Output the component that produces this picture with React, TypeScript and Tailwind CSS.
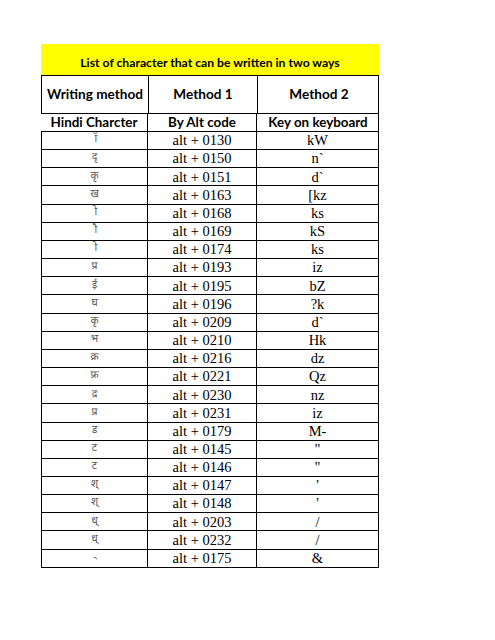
import React from "react";

const rows: [string, string, string][] = [
  ["\u00A0ॉ", "alt + 0130", "kW"],
  ["दृ", "alt + 0150", "n`"],
  ["कृ", "alt + 0151", "d`"],
  ["ख", "alt + 0163", "[kz"],
  ["\u00A0ो", "alt + 0168", "ks"],
  ["\u00A0ौ", "alt + 0169", "kS"],
  ["\u00A0ो", "alt + 0174", "ks"],
  ["प्र", "alt + 0193", "iz"],
  ["ई", "alt + 0195", "bZ"],
  ["घ", "alt + 0196", "?k"],
  ["कृ", "alt + 0209", "d`"],
  ["भ", "alt + 0210", "Hk"],
  ["क्र", "alt + 0216", "dz"],
  ["फ्र", "alt + 0221", "Qz"],
  ["द्र", "alt + 0230", "nz"],
  ["प्र", "alt + 0231", "iz"],
  ["ड", "alt + 0179", "M-"],
  ["ट", "alt + 0145", '"'],
  ["ट", "alt + 0146", '"'],
  ["श्", "alt + 0147", "'"],
  ["श्", "alt + 0148", "'"],
  ["ध्", "alt + 0203", "/"],
  ["ध्", "alt + 0232", "/"],
  ["\u00A0्", "alt + 0175", "&"],
];

const calibri = { fontFamily: '"Lato", "Open Sans", sans-serif' };

export default function App() {
  return (
    <div className="w-[495px] h-[640px] bg-white pt-[44px] pl-[41px]">
      <div className="w-[338px]">
        <div
          className="h-[31px] bg-[#ffff00] flex items-end justify-center pb-[3px] text-[12.2px] font-bold text-black"
          style={calibri}
        >
          List of character that can be written in two ways
        </div>
        <div
          className="grid grid-cols-[107px_109px_122px] h-[39px] border border-black text-[13.6px] font-bold text-black"
          style={calibri}
        >
          <div className="border-r border-black flex items-center justify-center">Writing method</div>
          <div className="border-r border-black flex items-center justify-center">Method 1</div>
          <div className="flex items-center justify-center">Method 2</div>
        </div>
        <div
          className="grid grid-cols-[107px_109px_122px] h-[18px] border-r border-b border-black text-[13.4px] font-bold text-black leading-none"
          style={calibri}
        >
          <div className="border-r border-black flex items-center justify-center">Hindi Charcter</div>
          <div className="border-r border-black flex items-center justify-center">By Alt code</div>
          <div className="flex items-center justify-center">Key on keyboard</div>
        </div>
        <div className="border-l border-r border-black">
          {rows.map(([h, a, k], i) => (
            <div
              key={i}
              className="grid grid-cols-[106px_109px_121px] h-[18.17px] border-b border-black"
            >
              <div
                className={
                  i === rows.length - 1
                    ? "border-r border-black flex items-start justify-center text-[10.5px] text-[#555] leading-none"
                    : "border-r border-black flex items-center justify-center text-[10.5px] text-[#555] leading-none"
                }
                style={{ fontFamily: '"Noto Sans Devanagari", "Noto Sans", sans-serif' }}
              >
                {h}
              </div>
              <div
                className="border-r border-black flex items-center justify-center text-[14.5px] text-black leading-none"
                style={{ fontFamily: '"Liberation Serif", serif' }}
              >
                {a}
              </div>
              <div
                className="flex items-center justify-center text-[14.5px] text-black leading-none"
                style={{ fontFamily: '"Liberation Serif", serif' }}
              >
                {k}
              </div>
            </div>
          ))}
        </div>
      </div>
    </div>
  );
}
